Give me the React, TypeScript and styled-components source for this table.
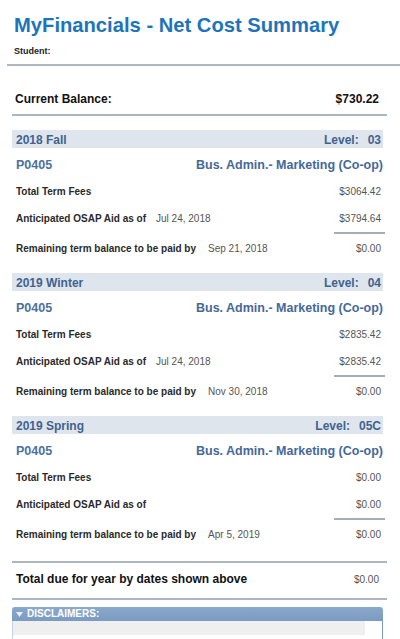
import React from "react";
import styled, { createGlobalStyle } from "styled-components";

const GlobalStyle = createGlobalStyle`
  html, body { margin: 0; padding: 0; background: #ffffff; }
  body { font-family: "Liberation Sans", Arial, sans-serif; }
  * { box-sizing: border-box; }
`;

const Page = styled.div`
  width: 400px;
  height: 639px;
  overflow: hidden;
  background: #fff;
`;

const Header = styled.header`
  padding: 13px 0 0 14px;
`;

const Title = styled.h1`
  margin: 0;
  font-size: 20.2px;
  line-height: 24px;
  font-weight: bold;
  color: #1c75bc;
`;

const Student = styled.div`
  margin-top: 8px;
  font-size: 9px;
  line-height: 12px;
  font-weight: bold;
  color: #222;
`;

const HeaderRule = styled.div`
  margin: 7px 0 0 7px;
  height: 2px;
  background: #adb6c2;
`;

const Main = styled.main`
  padding: 0 13px 0 12px;
`;

const Rule = styled.div<{ $top: number; $bottom: number }>`
  height: 2px;
  background: #adb5c0;
  margin-top: ${(p) => p.$top}px;
  margin-bottom: ${(p) => p.$bottom}px;
`;

const BalanceRow = styled.div`
  margin-top: 25px;
  margin-bottom: 7px;
  display: flex;
  justify-content: space-between;
  align-items: baseline;
  padding: 0 8px 0 3px;
  font-size: 12px;
  line-height: 16px;
  font-weight: bold;
  color: #111;
`;

const Section = styled.section`
  width: 371px;
  margin-top: 14px;
  & + & {
    margin-top: 11px;
  }
`;

const TermBar = styled.div`
  height: 18px;
  padding: 3px 2px 0 4px;
  background: #dfe5ec;
  display: flex;
  justify-content: space-between;
  font-size: 12px;
  line-height: 15px;
  font-weight: bold;
  color: #3f6390;
`;

const Level = styled.span`
  display: flex;
  gap: 9px;
`;

const ProgramRow = styled.div`
  margin-top: 5px;
  height: 25px;
  display: flex;
  justify-content: space-between;
  padding-left: 4px;
  font-size: 12.5px;
  line-height: 25px;
  color: #45689a;
`;

const ProgramCode = styled.span`
  font-weight: bold;
  color: #4d70a0;
`;

const ProgramName = styled.span`
  font-weight: bold;
`;

const FeeRow = styled.div`
  height: 27px;
  display: flex;
  align-items: baseline;
  padding: 0 2px 0 4px;
  font-size: 10px;
  line-height: 27px;
`;

const FeeLabel = styled.span`
  font-weight: bold;
  color: #2a2a2a;
`;

const FeeDate = styled.span<{ $gap: number }>`
  margin-left: ${(p) => p.$gap}px;
  color: #555;
`;

const FeeValue = styled.span`
  margin-left: auto;
  color: #555;
`;

const SubRule = styled.div`
  width: 51px;
  height: 2px;
  margin: 0 -2px 1px auto;
  background: #a3adb8;
`;

const TotalRow = styled.div`
  height: 32px;
  display: flex;
  align-items: baseline;
  padding: 0 8px 0 4px;
  line-height: 32px;
`;

const TotalLabel = styled.span`
  font-size: 12px;
  font-weight: bold;
  color: #111;
`;

const TotalValue = styled.span`
  margin-left: auto;
  font-size: 10px;
  color: #555;
`;

const Disclaimers = styled.div`
  margin-top: 7px;
  width: 371px;
`;

const DisclaimerBar = styled.div`
  height: 14px;
  border-radius: 3px 3px 0 0;
  background: linear-gradient(#8aa8cb, #7b9bc1);
  display: flex;
  align-items: center;
  gap: 4px;
  padding-left: 4px;
  font-size: 10px;
  line-height: 14px;
  font-weight: bold;
  color: #fff;
`;

const Caret = styled.svg`
  width: 7px;
  height: 5px;
  flex: none;
`;

const DisclaimerBody = styled.div`
  height: 30px;
  border-left: 1px solid #c9d4e2;
  border-right: 1px solid #7b9bc1;
  padding-right: 17px;
`;

const DisclaimerContent = styled.div`
  height: 14px;
  background: #efefef;
`;

type Term = {
  name: string;
  level: string;
  fees: string;
  osapDate: string;
  osap: string;
  dueDate: string;
  remaining: string;
};

const terms: Term[] = [
  {
    name: "2018 Fall",
    level: "03",
    fees: "$3064.42",
    osapDate: "Jul 24, 2018",
    osap: "$3794.64",
    dueDate: "Sep 21, 2018",
    remaining: "$0.00",
  },
  {
    name: "2019 Winter",
    level: "04",
    fees: "$2835.42",
    osapDate: "Jul 24, 2018",
    osap: "$2835.42",
    dueDate: "Nov 30, 2018",
    remaining: "$0.00",
  },
  {
    name: "2019 Spring",
    level: "05C",
    fees: "$0.00",
    osapDate: "",
    osap: "$0.00",
    dueDate: "Apr 5, 2019",
    remaining: "$0.00",
  },
];

function TermSection({ t }: { t: Term }) {
  return (
    <Section>
      <TermBar>
        <span>{t.name}</span>
        <Level>
          <span>Level:</span>
          <span>{t.level}</span>
        </Level>
      </TermBar>
      <ProgramRow>
        <ProgramCode>P0405</ProgramCode>
        <ProgramName>Bus. Admin.- Marketing (Co-op)</ProgramName>
      </ProgramRow>
      <FeeRow>
        <FeeLabel>Total Term Fees</FeeLabel>
        <FeeValue>{t.fees}</FeeValue>
      </FeeRow>
      <FeeRow>
        <FeeLabel>Anticipated OSAP Aid as of</FeeLabel>
        <FeeDate $gap={10}>{t.osapDate}</FeeDate>
        <FeeValue>{t.osap}</FeeValue>
      </FeeRow>
      <SubRule />
      <FeeRow>
        <FeeLabel>Remaining term balance to be paid by</FeeLabel>
        <FeeDate $gap={12}>{t.dueDate}</FeeDate>
        <FeeValue>{t.remaining}</FeeValue>
      </FeeRow>
    </Section>
  );
}

export default function App() {
  return (
    <Page>
      <GlobalStyle />
      <Header>
        <Title>MyFinancials - Net Cost Summary</Title>
        <Student>Student:</Student>
      </Header>
      <HeaderRule />
      <Main>
        <BalanceRow>
          <span>Current Balance:</span>
          <span>$730.22</span>
        </BalanceRow>
        <Rule $top={0} $bottom={0} />
        {terms.map((t) => (
          <TermSection key={t.name} t={t} />
        ))}
        <Rule $top={13} $bottom={0} />
        <TotalRow>
          <TotalLabel>Total due for year by dates shown above</TotalLabel>
          <TotalValue>$0.00</TotalValue>
        </TotalRow>
        <Rule $top={3} $bottom={0} />
        <Disclaimers>
          <DisclaimerBar>
            <Caret viewBox="0 0 7 5">
              <path d="M0 0 L7 0 L3.5 5 Z" fill="#e6eef8" />
            </Caret>
            <span>DISCLAIMERS:</span>
          </DisclaimerBar>
          <DisclaimerBody>
            <DisclaimerContent />
          </DisclaimerBody>
        </Disclaimers>
      </Main>
    </Page>
  );
}
